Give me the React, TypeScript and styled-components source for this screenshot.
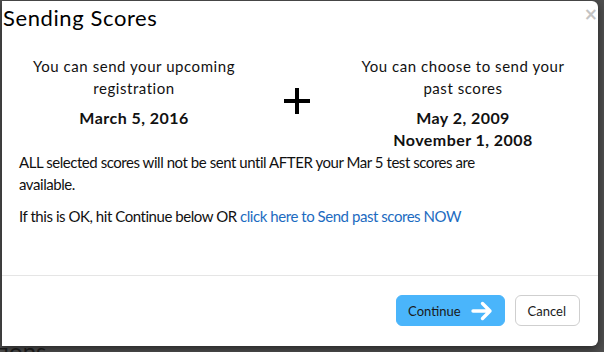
import React from "react";
import styled, { createGlobalStyle } from "styled-components";

const GlobalStyle = createGlobalStyle`
  html, body {
    margin: 0;
    padding: 0;
  }
  body {
    font-family: "Lato", "Liberation Sans", sans-serif;
    color: #111;
  }
`;

const Screen = styled.div`
  position: relative;
  width: 604px;
  height: 352px;
  overflow: hidden;
  background-color: #4e4e4e;
  box-sizing: border-box;
  padding: 1px 6px 6px 2px;
`;

const BehindHeading = styled.h2`
  position: absolute;
  left: -38px;
  bottom: -13px;
  margin: 0;
  font-size: 24px;
  font-weight: normal;
  color: #1f1f1f;
`;

const Modal = styled.div`
  position: relative;
  display: flex;
  flex-direction: column;
  height: 345px;
  background-color: #fff;
  border-radius: 0 6px 6px 0;
  box-shadow: 0 3px 9px rgba(0, 0, 0, 0.5);
`;

const Header = styled.div`
  display: flex;
  justify-content: space-between;
  align-items: flex-start;
  padding: 3px 0 0 1px;
`;

const Title = styled.h1`
  margin: 0;
  font-size: 22px;
  letter-spacing: 0.6px;
  font-weight: normal;
  line-height: 28px;
  color: #000;
`;

const Close = styled.button`
  border: 0;
  background: none;
  padding: 0;
  margin-top: 2px;
  font-family: "DejaVu Sans", sans-serif;
  font-size: 17px;
  font-weight: bold;
  line-height: 1;
  color: #c4c4c4;
  cursor: pointer;
`;

const Body = styled.div`
  flex: 1;
  padding: 23px 17px 0 17px;
  font-size: 15px;
  line-height: 22px;
`;

const Choices = styled.div`
  display: grid;
  grid-template-columns: 230px 1fr 236px;
  align-items: start;
`;

const Choice = styled.div`
  text-align: center;
`;

const ChoiceText = styled.p`
  margin: 0 0 8px 0;
  letter-spacing: 0.55px;
`;

const DateLine = styled.div<{ $drop?: number }>`
  font-weight: bold;
  font-size: 16px;
  letter-spacing: 0.45px;
  line-height: 22px;
  margin-top: ${(p) => p.$drop ?? 0}px;
`;

const Plus = styled.div`
  display: flex;
  justify-content: center;
  padding-top: 33px;
`;

const Note = styled.p<{ $gap?: number }>`
  margin: 0 0 ${(p) => p.$gap ?? 0}px 0;
  max-width: 510px;
  letter-spacing: -0.45px;
`;

const Link = styled.a`
  color: #1c6bc1;
  text-decoration: none;
  cursor: pointer;
`;

const Footer = styled.div`
  display: flex;
  justify-content: flex-end;
  gap: 10px;
  padding: 19px 18px 20px 0;
  border-top: 1px solid #e5e5e5;
`;

const Button = styled.button<{ $primary?: boolean }>`
  display: flex;
  align-items: center;
  gap: 10px;
  height: 31px;
  box-sizing: border-box;
  border-radius: 6px;
  font-family: inherit;
  font-size: 13px;
  color: #1a1a1a;
  cursor: pointer;
  padding: ${(p) => (p.$primary ? "0 11px 0 11px" : "0 13px 0 12px")};
  background-color: ${(p) => (p.$primary ? "#4ab5fb" : "#fff")};
  border: 1px solid ${(p) => (p.$primary ? "#4ab5fb" : "#cfcfcf")};
`;

function PlusSign() {
  return (
    <svg width="26" height="26" viewBox="0 0 26 26">
      <rect x="11" y="0" width="4" height="26" fill="#000" />
      <rect x="0" y="11" width="26" height="4" fill="#000" />
    </svg>
  );
}

function ArrowRight() {
  return (
    <svg width="22" height="20" viewBox="0 0 22 20" fill="none">
      <path
        d="M2 10 H19 M11.5 2.5 L19 10 L11.5 17.5"
        stroke="#fff"
        strokeWidth="3.4"
        strokeLinecap="round"
        strokeLinejoin="round"
      />
    </svg>
  );
}

export default function App() {
  return (
    <>
      <GlobalStyle />
      <Screen>
        <BehindHeading>Options</BehindHeading>
        <Modal>
          <Header>
            <Title>Sending Scores</Title>
            <Close aria-label="Close">×</Close>
          </Header>
          <Body>
            <Choices>
              <Choice>
                <ChoiceText>You can send your upcoming registration</ChoiceText>
                <DateLine $drop={2}>March 5, 2016</DateLine>
              </Choice>
              <Plus>
                <PlusSign />
              </Plus>
              <Choice>
                <ChoiceText>You can choose to send your past scores</ChoiceText>
                <DateLine>May 2, 2009</DateLine>
                <DateLine>November 1, 2008</DateLine>
              </Choice>
            </Choices>
            <Note $gap={10}>
              ALL selected scores will not be sent until AFTER your Mar 5 test
              scores are available.
            </Note>
            <Note>
              If this is OK, hit Continue below OR{" "}
              <Link>click here to Send past scores NOW</Link>
            </Note>
          </Body>
          <Footer>
            <Button $primary>
              Continue
              <ArrowRight />
            </Button>
            <Button>Cancel</Button>
          </Footer>
        </Modal>
      </Screen>
    </>
  );
}
